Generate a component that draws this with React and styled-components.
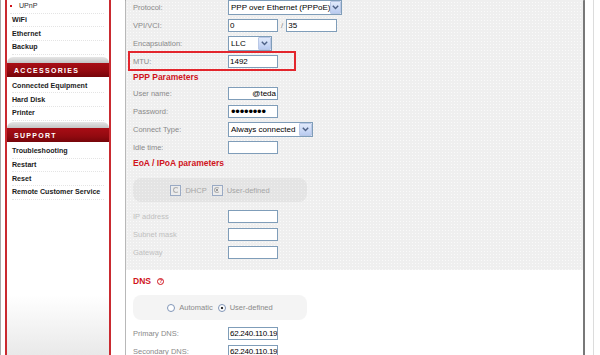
import React from 'react';
import styled, { createGlobalStyle } from 'styled-components';

const GlobalStyle = createGlobalStyle`
  html, body { margin: 0; padding: 0; background: #fff; }
  body { font-family: "Liberation Sans", Arial, sans-serif; overflow: hidden; }
`;

const Page = styled.div`
  display: flex;
  height: 355px;
  overflow: hidden;
`;

const SideWrap = styled.div`
  display: flex;
  border-left: 1px solid #a8a8a8;
  padding-left: 4px;
  flex-shrink: 0;
`;

const SideFrame = styled.div`
  width: 102px;
  border-left: 2px solid #c92a30;
  border-right: 2px solid #c92a30;
  background: linear-gradient(to bottom, #fff 0, #fff 295px, #e9e9e9 355px);
  overflow: hidden;
`;

const SideList = styled.div`
  margin-top: ${({ $first }) => ($first ? '0' : '3px')};
`;

const SideItem = styled.div`
  box-sizing: border-box;
  height: 13.7px;
  margin: 0 5px 0 ${({ $sub }) => ($sub ? '3px' : '5px')};
  display: flex;
  align-items: center;
  gap: 7px;
  border-bottom: 1px dotted #e4e4e4;
  font-size: 7.1px;
  font-weight: ${({ $sub }) => ($sub ? 'normal' : 'bold')};
  color: ${({ $sub }) => ($sub ? '#333' : '#1c1c1c')};
  white-space: nowrap;
`;

const Bullet = styled.span`
  width: 2px;
  height: 2px;
  background: #d0141c;
`;

const SectionHead = styled.div`
  margin-top: ${({ $mt }) => $mt}px;
  height: 20px;
  box-sizing: border-box;
  padding: 6px 0 0 7px;
  border-radius: 6px 6px 0 0;
  background:
    linear-gradient(to bottom, #e6e6e6 0, #c4c4c4 6px, #a80d15 6px, #930a10 14px, #76050a 20px);
  color: #fff;
  font-size: 7px;
  font-weight: bold;
  letter-spacing: 1.3px;
  line-height: 15px;
`;

const Main = styled.div`
  margin-left: 14px;
  width: 457px;
  flex-shrink: 0;
  border-left: 1px solid #b8b8b8;
  border-right: 2px solid #787878;
  border-top: 1px solid #9a9a9a;
`;

const GraySection = styled.div`
  padding: 0 0 9px 7px;
  background-color: #efefef;
  background-image: radial-gradient(circle, #fafafa 0.55px, transparent 0.9px);
  background-size: 3px 3px;
`;

const WhiteSection = styled.div`
  padding: 4px 0 0 7px;
`;

const FormRow = styled.div`
  box-sizing: border-box;
  display: grid;
  grid-template-columns: 95px auto;
  align-items: center;
  height: 18px;
  font-size: 7.5px;
  color: ${({ $disabled }) => ($disabled ? '#c0c0c0' : '#8a8a8a')};
  margin-top: ${({ $mt }) => ($mt ? `${$mt}px` : '0')};
`;

const HighlightRow = styled(FormRow)`
  width: 168px;
  height: 20px;
  margin: -1px 0 -1px -5px;
  padding-left: 3px;
  border: 2px solid #e3262d;
`;

const Field = styled.div`
  display: flex;
  align-items: center;
  gap: 2px;
`;

const TextBox = styled.div`
  box-sizing: border-box;
  width: ${({ $w }) => $w || 50}px;
  height: 13px;
  border: 1px solid #7f9db9;
  background: #fff;
  font-size: 8px;
  line-height: 11px;
  color: #000;
  padding: 0 1px;
  overflow: hidden;
  white-space: nowrap;
  letter-spacing: ${({ $tight }) => ($tight ? '-0.25px' : '0')};
  text-align: ${({ $right }) => ($right ? 'right' : 'left')};
`;

const Dots = styled.span`
  font-size: 13px;
  line-height: 11px;
  letter-spacing: -0.2px;
  padding-left: 1px;
`;

const Slash = styled.span`
  font-size: 8px;
  color: #8a8a8a;
  margin: 0 1px;
`;

const SelectBox = styled.div`
  box-sizing: border-box;
  width: ${({ $w }) => $w}px;
  height: 15px;
  display: flex;
  align-items: center;
  justify-content: space-between;
  border: 1px solid #7f9db9;
  background: #fff;
  padding-left: 2px;
  font-size: 8px;
  color: #000;
  white-space: nowrap;
`;

const ArrowBtn = styled.span`
  box-sizing: border-box;
  width: 13px;
  height: 13px;
  display: flex;
  align-items: center;
  justify-content: center;
  background: linear-gradient(to bottom, #e1eafb, #b9cbf0);
  border: 1px solid #b9c8e6;
  border-radius: 1px;
`;

const Title = styled.div`
  display: flex;
  align-items: center;
  gap: 4px;
  height: 14px;
  color: #d0141c;
  font-size: 8.5px;
  font-weight: bold;
  white-space: pre;
`;

const HelpIcon = styled.span`
  box-sizing: border-box;
  width: 7px;
  height: 7px;
  border: 1px solid #d0141c;
  border-radius: 50%;
  display: flex;
  align-items: center;
  justify-content: center;
  font-size: 5px;
  font-weight: bold;
  line-height: 1;
`;

const RadioBox = styled.div`
  box-sizing: border-box;
  width: 174px;
  height: ${({ $h }) => $h}px;
  margin-top: ${({ $mt }) => $mt}px;
  border-radius: 8px;
  background: rgba(0, 0, 0, 0.045);
  display: flex;
  align-items: center;
  justify-content: center;
  gap: 5px;
  font-size: 7.5px;
  color: ${({ $disabled }) => ($disabled ? '#a6a6a6' : '#8a8a8a')};
`;

const RadioLabel = styled.span`
  display: flex;
  align-items: center;
  gap: 4px;
`;

const SquareRadio = styled.span`
  box-sizing: border-box;
  width: 11px;
  height: 11px;
  border: 1px solid #9aaac4;
  background: #ececec;
  display: flex;
  align-items: center;
  justify-content: center;
  &::after {
    content: '';
    box-sizing: border-box;
    width: 6px;
    height: 6px;
    border-radius: 50%;
    border: 1px solid #b0b0b0;
    border-right-color: transparent;
    background: ${({ $on }) => ($on ? 'radial-gradient(circle, #999 1px, transparent 1.3px)' : 'none')};
  }
`;

const Radio = styled.span`
  box-sizing: border-box;
  width: 8px;
  height: 8px;
  border-radius: 50%;
  border: 1px solid #8196b8;
  background: ${({ $on }) => ($on ? 'radial-gradient(circle, #333 1.3px, #fff 1.6px)' : '#fff')};
`;

const RightGap = styled.div`
  width: 8px;
  flex-shrink: 0;
  border-right: 1px solid #dcdcdc;
`;

const Chevron = () => (
  <svg width="7" height="5" viewBox="0 0 7 5">
    <path d="M0.8 0.8 L3.5 3.6 L6.2 0.8" fill="none" stroke="#4d6185" strokeWidth="1.4" />
  </svg>
);

const Select = ({ w, children }) => (
  <SelectBox $w={w}>
    <span>{children}</span>
    <ArrowBtn><Chevron /></ArrowBtn>
  </SelectBox>
);

const App = () => (
  <>
    <GlobalStyle />
    <Page>
      <SideWrap>
        <SideFrame>
          <SideList $first>
            <SideItem $sub><Bullet />UPnP</SideItem>
            <SideItem>WiFi</SideItem>
            <SideItem>Ethernet</SideItem>
            <SideItem>Backup</SideItem>
          </SideList>
          <SectionHead $mt={2}>ACCESSORIES</SectionHead>
          <SideList>
            <SideItem>Connected Equipment</SideItem>
            <SideItem>Hard Disk</SideItem>
            <SideItem>Printer</SideItem>
          </SideList>
          <SectionHead $mt={1}>SUPPORT</SectionHead>
          <SideList>
            <SideItem>Troubleshooting</SideItem>
            <SideItem>Restart</SideItem>
            <SideItem>Reset</SideItem>
            <SideItem>Remote Customer Service</SideItem>
          </SideList>
        </SideFrame>
      </SideWrap>

      <Main>
        <GraySection>
          <FormRow $mt={-3}>
            <span>Protocol:</span>
            <Field><Select w={114}>PPP over Ethernet (PPPoE)</Select></Field>
          </FormRow>
          <FormRow>
            <span>VPI/VCI:</span>
            <Field>
              <TextBox>0</TextBox>
              <Slash>/</Slash>
              <TextBox $w={51}>35</TextBox>
            </Field>
          </FormRow>
          <FormRow>
            <span>Encapsulation:</span>
            <Field><Select w={44}>LLC</Select></Field>
          </FormRow>
          <HighlightRow>
            <span>MTU:</span>
            <Field><TextBox>1492</TextBox></Field>
          </HighlightRow>

          <Title>PPP Parameters</Title>
          <FormRow>
            <span>User name:</span>
            <Field><TextBox $right>@teda</TextBox></Field>
          </FormRow>
          <FormRow>
            <span>Password:</span>
            <Field><TextBox><Dots>••••••••</Dots></TextBox></Field>
          </FormRow>
          <FormRow>
            <span>Connect Type:</span>
            <Field><Select w={85}>Always connected</Select></Field>
          </FormRow>
          <FormRow>
            <span>Idle time:</span>
            <Field><TextBox /></Field>
          </FormRow>

          <Title>EoA / IPoA parameters</Title>
          <RadioBox $h={24} $mt={8} $disabled>
            <RadioLabel><SquareRadio />DHCP</RadioLabel>
            <RadioLabel><SquareRadio $on />User-defined</RadioLabel>
          </RadioBox>
          <FormRow $disabled $mt={5}>
            <span>IP address</span>
            <Field><TextBox /></Field>
          </FormRow>
          <FormRow $disabled>
            <span>Subnet mask</span>
            <Field><TextBox /></Field>
          </FormRow>
          <FormRow $disabled>
            <span>Gateway</span>
            <Field><TextBox /></Field>
          </FormRow>
        </GraySection>

        <WhiteSection>
          <Title>DNS <HelpIcon>?</HelpIcon></Title>
          <RadioBox $h={25} $mt={7}>
            <RadioLabel><Radio />Automatic</RadioLabel>
            <RadioLabel><Radio $on />User-defined</RadioLabel>
          </RadioBox>
          <FormRow $mt={4}>
            <span>Primary DNS:</span>
            <Field><TextBox $tight>62.240.110.19</TextBox></Field>
          </FormRow>
          <FormRow>
            <span>Secondary DNS:</span>
            <Field><TextBox $tight>62.240.110.19</TextBox></Field>
          </FormRow>
        </WhiteSection>
      </Main>
      <RightGap />
    </Page>
  </>
);

export default App;
